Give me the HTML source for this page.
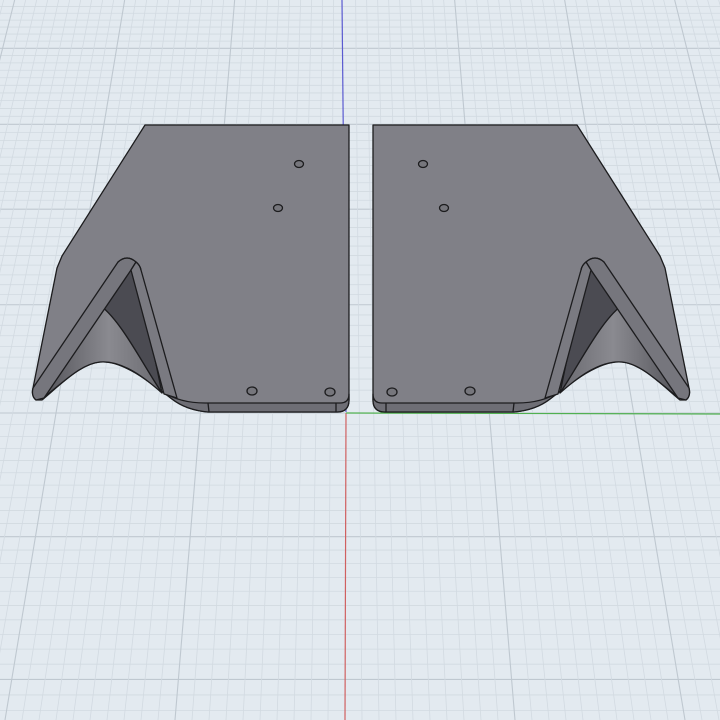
<!DOCTYPE html>
<html><head><meta charset="utf-8"><style>html,body{margin:0;padding:0;background:#e3eaf0;overflow:hidden}svg{display:block}</style></head>
<body>
<svg id="s" width="720" height="720" viewBox="0 0 720 720" xmlns="http://www.w3.org/2000/svg">
<rect width="720" height="720" fill="#e3eaf0"/>
<g id="grid"></g>
<line x1="342" y1="0" x2="346" y2="412" stroke="#5a5ad0" stroke-width="1.2"/>
<line x1="346" y1="413" x2="345" y2="720" stroke="#d06060" stroke-width="1.2"/>
<line x1="346" y1="413" x2="720" y2="414" stroke="#50b050" stroke-width="1.2"/>
<defs>
<linearGradient id="ug" x1="0" y1="0" x2="1" y2="0">
<stop offset="0" stop-color="#55555b"/><stop offset="0.55" stop-color="#8a8a90"/><stop offset="1" stop-color="#6a6a70"/>
</linearGradient>
<g id="piece" stroke="#1c1c1e" stroke-width="1.3" stroke-linejoin="round">
<path d="M145,125 L349,125 L349,400 Q349,412 337,412 L208,412 Q186,410 172,399 C150,382 122,360 100,362 C80,364 60,385 42,400 L36,400 Q31,396 33,388 L57,268 L62,256 Z" fill="#808087"/>
<path d="M163,392 Q180,403 205,403 L340,403 Q349,403 349,394 L349,400 Q349,412 337,412 L208,412 Q186,410 172,399 Z" fill="#6e6e75"/>
<line x1="208" y1="403" x2="209" y2="412"/>
<line x1="336" y1="403" x2="336" y2="412"/>
<path d="M97,303 L44,397 C62,384 80,364 100,362 C122,360 145,378 162,393 C140,360 120,318 97,303 Z" fill="url(#ug)"/>
<path d="M130,268 L97,303 C120,318 140,360 162,393 L137,272 Z" fill="#4b4b52"/>
<path d="M118,262 Q127,254 136,262 L131,270 L44,398 L36,400 Q31,396 33,388 Z" fill="#76767d"/>
<path d="M136,262 Q140,265 141,270 L177,398 L164,394 L131,270 Z" fill="#7a7a81"/>
<path d="M118,262 Q127,254 136,262 Q140,265 141,270" fill="none"/>
<ellipse cx="299" cy="164" rx="4.5" ry="3.5" fill="#76767c"/>
<ellipse cx="278" cy="208" rx="4.5" ry="3.5" fill="#76767c"/>
<ellipse cx="252" cy="391" rx="5" ry="4" fill="#76767c"/>
<ellipse cx="330" cy="392" rx="5" ry="4" fill="#76767c"/>
</g>
</defs>
<use href="#piece"/>
<use href="#piece" transform="translate(722,0) scale(-1,1)"/>
</svg>
<script>
(function(){
var g=document.getElementById('grid'),out='';
var vy=-1320,vx=344,C=260100;
var z0=C/(413-vy);
for(var n=-200;n<400;n++){var z=z0+n;if(z<=0)continue;var y=vy+C/z;if(y<0||y>720)continue;
var maj=(n%10===0);out+='<line x1="0" x2="720" y1="'+y.toFixed(2)+'" y2="'+y.toFixed(2)+'" stroke="'+(maj?'#bfc8d0':'#d2dae1')+'" stroke-width="'+(maj?1.1:0.8)+'"/>';}
for(var k=-40;k<40;k++){var x=345+17*k;var t=(0-vy)/(720-vy);var xt=vx+(x-vx)*t;
var maj=(k%10===0);if(k===0)continue;out+='<line x1="'+xt.toFixed(2)+'" y1="0" x2="'+x+'" y2="720" stroke="'+(maj?'#bfc8d0':'#d2dae1')+'" stroke-width="'+(maj?1.1:0.8)+'"/>';}
g.innerHTML=out;
})();
</script>
</body></html>
